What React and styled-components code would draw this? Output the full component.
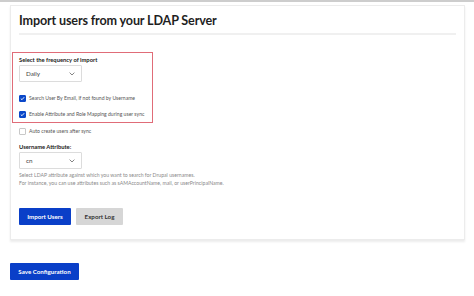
import React from "react";
import styled, { createGlobalStyle } from "styled-components";

const GlobalStyle = createGlobalStyle`
  html, body {
    margin: 0;
    padding: 0;
    background: #fff;
    font-family: Lato, "Noto Sans", sans-serif;
    color: #222;
  }
`;

const Page = styled.div`
  width: 474px;
  height: 296px;
  overflow: hidden;
  border-top: 2px solid #cdcdcd;
  box-sizing: border-box;
`;

const Card = styled.div`
  margin: 3px 9px 0 10px;
  border: 1px solid #ececec;
  box-shadow: 0 2px 2px rgba(0, 0, 0, 0.08);
  padding: 0 8px;
  height: 235px;
  box-sizing: border-box;
`;

const Title = styled.h2`
  margin: 0;
  padding: 6px 0 3px 0;
  font-size: 12.6px;
  font-weight: 700;
  letter-spacing: -0.15px;
  line-height: 18px;
  color: #1f1f1f;
  border-bottom: 2px solid #f0f0f0;
`;

const Highlight = styled.div`
  margin: 17px 0 0 -7px;
  width: 141px;
  border: 1px solid #e06c78;
  padding: 3px 0 4px 6px;
  box-sizing: border-box;
`;

const Label = styled.div`
  font-size: 5.8px;
  font-weight: 700;
  line-height: 8px;
  color: #222;
  margin-top: ${(p) => p.$mt || 0}px;
  margin-bottom: 1px;
`;

const Select = styled.div`
  width: 63px;
  height: 17px;
  box-sizing: border-box;
  border: 1px solid #dcdcdc;
  border-radius: 1px;
  display: flex;
  align-items: center;
  justify-content: space-between;
  padding: 0 6px;
  font-size: 6.3px;
  color: #444;
`;

const CheckRow = styled.label`
  display: flex;
  align-items: center;
  gap: 3px;
  font-size: 5.1px;
  color: #555;
  height: 8px;
  margin-top: ${(p) => p.$mt || 0}px;
  white-space: nowrap;
`;

const Box = styled.span`
  flex: none;
  width: 7px;
  height: 7px;
  border-radius: 1px;
  box-sizing: border-box;
  display: inline-flex;
  align-items: center;
  justify-content: center;
  background: ${(p) => (p.$checked ? "#0b48c9" : "#fff")};
  border: 1px solid ${(p) => (p.$checked ? "#0b48c9" : "#c8c8c8")};
`;

const Help = styled.div`
  font-size: 5.15px;
  line-height: 8px;
  color: #8a8a8a;
  margin-top: 2px;
  white-space: nowrap;
`;

const Actions = styled.div`
  display: flex;
  gap: 5px;
  margin-top: 21px;
`;

const Button = styled.button`
  height: 17px;
  width: ${(p) => p.$w}px;
  padding: 0;
  border: none;
  border-radius: 1px;
  font-family: inherit;
  font-size: 6.2px;
  font-weight: 700;
  color: ${(p) => (p.$variant === "grey" ? "#333" : "#fff")};
  background: ${(p) => (p.$variant === "grey" ? "#d6d6d6" : "#0a3fc8")};
`;

const Footer = styled.div`
  display: flex;
  padding: 23px 0 0 10px;
`;

const Chevron = () => (
  <svg width="6" height="4" viewBox="0 0 6 4">
    <path d="M0.6 0.6 L3 3 L5.4 0.6" fill="none" stroke="#666" strokeWidth="0.8" />
  </svg>
);

const Check = () => (
  <svg width="5" height="5" viewBox="0 0 5 5">
    <path d="M0.8 2.6 L2 3.7 L4.2 1.2" fill="none" stroke="#fff" strokeWidth="0.9" />
  </svg>
);

const Checkbox = ({ checked, children, mt }) => (
  <CheckRow $mt={mt}>
    <Box $checked={checked}>{checked && <Check />}</Box>
    {children}
  </CheckRow>
);

export default function App() {
  return (
    <>
      <GlobalStyle />
      <Page>
        <Card>
          <Title>Import users from your LDAP Server</Title>
          <Highlight>
            <Label>Select the frequency of import</Label>
            <Select>
              Daily <Chevron />
            </Select>
            <Checkbox checked mt={12}>
              Search User By Email, if not found by Username
            </Checkbox>
            <Checkbox checked mt={8}>
              Enable Attribute and Role Mapping during user sync
            </Checkbox>
          </Highlight>
          <Checkbox mt={4}>Auto create users after sync</Checkbox>
          <Label $mt={8}>Username Attribute:</Label>
          <Select>
            cn <Chevron />
          </Select>
          <Help>
            Select LDAP attribute against which you want to search for Drupal usernames.
            <br />
            For instance, you can use attributes such as sAMAccountName, mail, or userPrincipalName.
          </Help>
          <Actions>
            <Button $w={52}>Import Users</Button>
            <Button $variant="grey" $w={47}>
              Export Log
            </Button>
          </Actions>
        </Card>
        <Footer>
          <Button $w={69}>Save Configuration</Button>
        </Footer>
      </Page>
    </>
  );
}
